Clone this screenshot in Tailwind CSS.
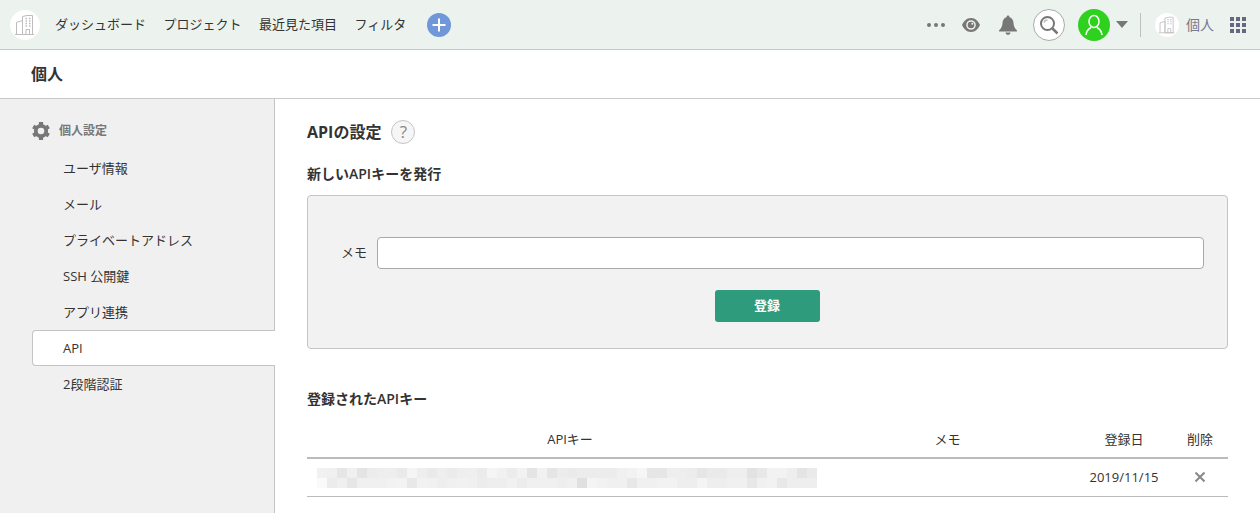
<!DOCTYPE html>
<html lang="ja">

<head>
  <meta charset="UTF-8">
  <meta name="viewport" content="width=device-width, initial-scale=1.0">
  <script src="https://cdn.jsdelivr.net/npm/@tailwindcss/browser@4"></script>
  <title>個人設定 API</title>
</head>

<body class="h-[513px] overflow-hidden bg-white text-[13px] text-[#333] font-['Open_Sans','Noto_Sans_CJK_JP',sans-serif]">

  <!-- top bar -->
  <header class="flex h-[50px] items-center border-b border-[#c4c7c5] bg-[#ecf2ee] pl-[10px] pr-[14px]">
    <div class="flex h-[30px] w-[30px] items-center justify-center rounded-full bg-white">
      <svg width="22" height="22" viewBox="0 0 22 22" fill="none" stroke="#bdbdbd" stroke-width="1">
        <path d="M2.5 20.5V8.5L8.5 6.5V20.5M8.5 2.5L13 1.5H18.5V20.5H8.5V2.5M12 20.5V15.5H15.5V20.5M1 20.5H20" />
        <path d="M11.5 4.5h1.5M15 4.5h1.5M11.5 7h1.5M15 7h1.5M11.5 9.5h1.5M15 9.5h1.5M11.5 12h1.5M15 12h1.5" stroke-width="1.4" />
      </svg>
    </div>
    <nav class="ml-[15px] flex gap-[17.5px] text-[#333]">
      <a>ダッシュボード</a>
      <a>プロジェクト</a>
      <a>最近見た項目</a>
      <a>フィルタ</a>
    </nav>
    <div class="ml-[20.5px] flex h-6 w-6 items-center justify-center rounded-full bg-[#6f97d9]">
      <svg width="14" height="14" viewBox="0 0 14 14" stroke="white" stroke-width="2">
        <path d="M7 0.5V13.5M0.5 7H13.5" />
      </svg>
    </div>

    <div class="ml-auto flex items-center">
      <div class="flex gap-[3px]">
        <span class="h-[4px] w-[4px] rounded-full bg-[#777]"></span>
        <span class="h-[4px] w-[4px] rounded-full bg-[#777]"></span>
        <span class="h-[4px] w-[4px] rounded-full bg-[#777]"></span>
      </div>
      <svg class="ml-[17px]" width="18" height="14" viewBox="0 0 18 14">
        <path fill="#777" fill-rule="evenodd" d="M9 0C4.5 0 1.5 3.5 0 7c1.5 3.500 4.500 7 9 7s7.500-3.500 9-7C16.500 3.500 13.500 0 9 0Zm0 2.200A4.800 4.800 0 1 1 9 11.800 4.800 4.800 0 0 1 9 2.200Z" />
        <circle cx="9" cy="7" r="3.300" fill="#777" />
        <circle cx="10.300" cy="5.800" r="1" fill="#ecf2ee" />
      </svg>
      <svg class="ml-[19px]" width="18" height="20" viewBox="0 0 18 20" fill="#777">
        <path d="M9 0.500C10 0.500 10.500 1.200 10.500 2.200C13.200 3 14.300 5.200 14.500 8C14.700 11 15.500 13 18 15.500V16.500H0V15.500C2.500 13 3.300 11 3.500 8C3.700 5.200 4.800 3 7.500 2.200C7.500 1.200 8 0.500 9 0.500Z" />
        <path d="M6.500 17.500H11.500C11.300 19 10.300 19.800 9 19.800S6.700 19 6.500 17.500Z" />
      </svg>
      <div class="ml-[16px] flex h-[32px] w-[32px] items-center justify-center rounded-full border border-[#aaa] bg-white">
        <svg width="20" height="20" viewBox="0 0 20 20" fill="none">
          <circle cx="8.500" cy="8.500" r="6.500" stroke="#777" stroke-width="2" />
          <path d="M5 7.500C5.500 5.800 6.800 5 8.500 5" stroke="#bbb" stroke-width="1.500" />
          <path d="M13.500 13.500L18.500 18.500" stroke="#777" stroke-width="2.500" />
        </svg>
      </div>
      <div class="ml-[13px] flex h-[32px] w-[32px] items-center justify-center rounded-full bg-[#2fd11f]">
        <svg width="20" height="22" viewBox="0 0 20 22" fill="none" stroke="white" stroke-width="1.500">
          <ellipse cx="10" cy="7.500" rx="5" ry="6" />
          <path d="M2 21C2.500 16.500 5 14.500 7 13.500M18 21C17.500 16.500 15 14.500 13 13.500" />
        </svg>
      </div>
      <span class="ml-[6px] h-0 w-0 border-x-[6px] border-t-[7px] border-x-transparent border-t-[#777]"></span>
      <span class="ml-[12px] h-[24px] w-px bg-[#bcc0be]"></span>
      <div class="ml-[14px] flex h-6 w-6 items-center justify-center rounded-full bg-white">
        <svg width="18" height="18" viewBox="0 0 22 22" fill="none" stroke="#bdbdbd" stroke-width="1">
          <path d="M2.500 20.500V8.500L8.500 6.500V20.500M8.500 2.500L13 1.500H18.500V20.500H8.500V2.500M12 20.500V15.500H15.500V20.500M1 20.500H20" />
          <path d="M11.500 4.500h1.500M15 4.500h1.500M11.500 7h1.500M15 7h1.500M11.500 9.500h1.500M15 9.500h1.500" stroke-width="1.400" />
        </svg>
      </div>
      <span class="ml-[7px] text-[14px] text-[#777a90]">個人</span>
      <div class="ml-[16px] grid grid-cols-3 gap-[2px]">
        <span class="h-[4px] w-[4px] bg-[#66687f]"></span><span class="h-[4px] w-[4px] bg-[#66687f]"></span><span class="h-[4px] w-[4px] bg-[#66687f]"></span>
        <span class="h-[4px] w-[4px] bg-[#66687f]"></span><span class="h-[4px] w-[4px] bg-[#66687f]"></span><span class="h-[4px] w-[4px] bg-[#66687f]"></span>
        <span class="h-[4px] w-[4px] bg-[#66687f]"></span><span class="h-[4px] w-[4px] bg-[#66687f]"></span><span class="h-[4px] w-[4px] bg-[#66687f]"></span>
      </div>
    </div>
  </header>

  <!-- page title -->
  <div class="flex h-[49px] items-center border-b border-[#c9c9c9] pl-[31px] text-[16px] font-bold">個人</div>

  <div class="flex h-[414px]">
    <!-- side menu -->
    <aside class="w-[275px] shrink-0 border-r border-[#c4c4c4] bg-[#f0f0f0] pl-[32px] pt-[14px]">
      <div class="flex h-[36px] items-center gap-[9px] text-[12px] font-bold text-[#777]">
        <svg width="18" height="18" viewBox="0 0 18 18" fill="none" stroke="#777">
          <circle cx="9" cy="9" r="5.200" stroke-width="3.800" />
          <path d="M9 0V4M9 14V18M16.800 4.500L13.300 6.500M4.700 11.500L1.200 13.500M16.800 13.500L13.300 11.500M4.700 6.500L1.200 4.500" stroke-width="4.200" />
        </svg>
        個人設定
      </div>
      <ul class="mt-px">
        <li class="flex h-[36px] items-center pl-[31px] pt-[2px]">ユーザ情報</li>
        <li class="flex h-[36px] items-center pl-[31px] pt-[2px]">メール</li>
        <li class="flex h-[36px] items-center pl-[31px] pt-[2px]">プライベートアドレス</li>
        <li class="flex h-[36px] items-center pl-[31px] pt-[2px]">SSH 公開鍵</li>
        <li class="flex h-[36px] items-center pl-[31px] pt-[2px]">アプリ連携</li>
        <li class="relative -mr-px flex h-[36px] items-center rounded-l-[4px] border border-r-0 border-[#c4c4c4] bg-white pl-[30px] pt-[2px]">API</li>
        <li class="flex h-[36px] items-center pl-[31px] pt-[2px]">2段階認証</li>
      </ul>
    </aside>

    <!-- content -->
    <main class="min-w-0 flex-1 pl-[32px] pr-[32px] pt-[20px]">
      <div class="flex h-[26px] items-center">
        <h1 class="text-[16px] font-bold">APIの設定</h1>
        <span class="ml-[10px] flex h-6 w-6 items-center justify-center rounded-full border border-[#c4c4c4] bg-[#f6f6f6] text-[17px] text-[#888]">?</span>
      </div>

      <h2 class="mt-[19px] text-[14px] font-semibold leading-[20px]">新しいAPIキーを発行</h2>
      <section class="mt-[11px] h-[154px] rounded-[4px] border border-[#c4c4c4] bg-[#f2f2f2] pt-[41px]">
        <div class="flex items-center">
          <label class="w-[69px] pr-[10px] text-right">メモ</label>
          <input type="text" class="h-[32px] w-[827px] rounded-[4px] border border-[#a8a8a8] bg-white">
        </div>
        <div class="mt-[21px] flex justify-center">
          <button class="ml-[-1px] h-[32px] w-[105px] rounded-[3px] bg-[#2d9b7c] font-bold text-white">登録</button>
        </div>
      </section>

      <h2 class="mt-[40px] text-[14px] font-semibold leading-[20px]">登録されたAPIキー</h2>
      <table class="mt-[11px] w-full table-fixed text-[13px]">
        <thead>
          <tr class="h-[38px] border-b-2 border-[#bbb]">
            <th class="w-[526px] pt-[3px] font-normal">APIキー</th>
            <th class="w-[229px] pt-[3px] font-normal">メモ</th>
            <th class="w-[124px] pt-[3px] font-normal">登録日</th>
            <th class="pr-[14px] pt-[3px] font-normal">削除</th>
          </tr>
        </thead>
        <tbody>
          <tr class="h-[38px] border-b border-[#bbb]">
            <td class="pl-[10px] pt-[2px]"><div id="key" class="grid w-[500px] grid-cols-[repeat(50,10px)]"></div></td>
            <td></td>
            <td class="pt-px text-center">2019/11/15</td>
            <td class="pr-[14px]">
              <svg class="mx-auto" width="10" height="10" viewBox="0 0 10 10" stroke="#888" stroke-width="2">
                <path d="M0.500 0.500L9.500 9.500M9.500 0.500L0.500 9.500" />
              </svg>
            </td>
          </tr>
        </tbody>
      </table>
    </main>
  </div>

  <script>
    // blurred out api key, two rows of grey blocks
    const tonos = [
      'f1','f0','e6','f0','e4','ec','ee','ee','ea','f5','ee','ea','ee','eb','ee','ef','eb','f5','f1','ec','f2','e4','f1','e5','ec',
      'ea','ec','ec','ec','ec','f0','f2','f6','e6','e6','ee','ee','ec','e6','ea','ea','ee','ee','e2','e8','f2','f2','ee','e4','ea',
      'fa','ec','f0','e6','f0','f0','f0','f2','f3','e8','f2','f1','ee','f0','f1','f0','ec','ee','ee','f1','ec','f0','f0','f0','ee',
      'f0','e0','f4','f2','f0','f0','e8','f0','f0','f2','f2','ee','ee','f4','ee','ee','f0','f0','e8','f0','f2','e8','ee','ee','ee'
    ];
    const key = document.getElementById('key');
    tonos.forEach(t => {
      const celda = document.createElement('div');
      celda.className = 'h-[10px]';
      celda.style.backgroundColor = '#' + t + t + t;
      key.appendChild(celda);
    });
  </script>

</body>

</html>
